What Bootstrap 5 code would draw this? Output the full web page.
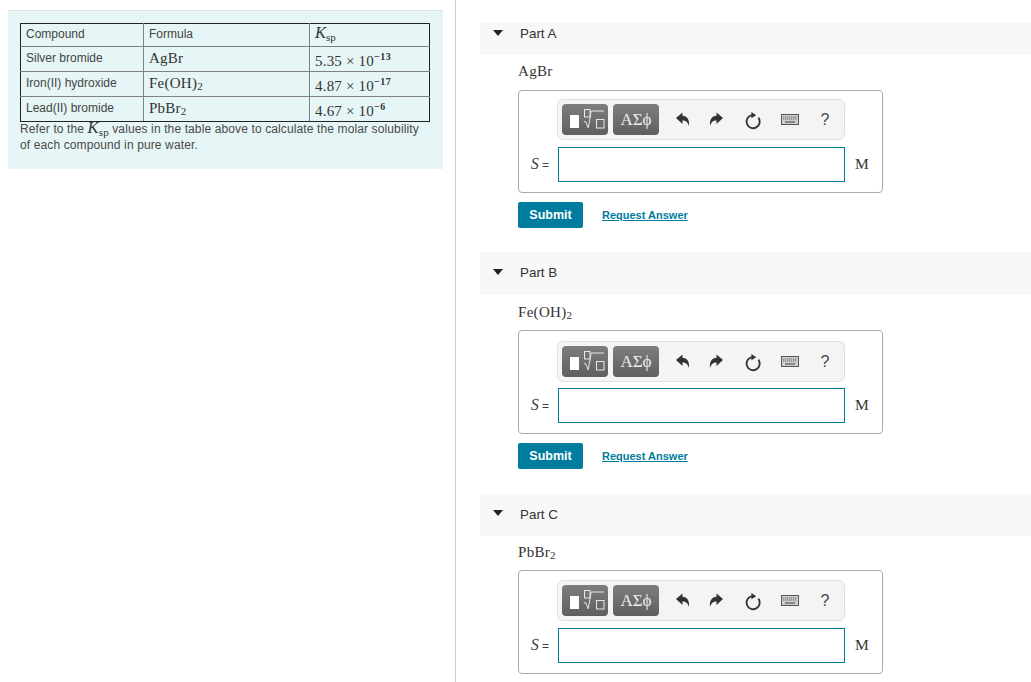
<!DOCTYPE html>
<html lang="en"><head><meta charset="utf-8"><title>Solubility</title>
<link rel="stylesheet" href="https://cdn.jsdelivr.net/npm/bootstrap@5.3.0/dist/css/bootstrap.min.css">
<style>
html,body{height:682px;overflow:hidden;background:#fff}
body{font-family:"Liberation Sans",Arial,sans-serif;font-size:12px;color:#333;line-height:16px}
.shell{height:682px}
.leftcol{width:456px;flex:none;border-right:1px solid #c9ced3;padding:10px 12px 0 8px}
.intro{height:159px;background:#e6f5f5;border-top:1px solid #d9e3e6;padding:12px 12px 0 12px}
.ktable{width:409px;border-collapse:collapse;table-layout:fixed}
.ktable td{border:1px solid #808080;padding:0 0 2px 5px;height:25px;line-height:16px;color:#444;vertical-align:middle}
.ktable tr:first-child td{height:23px;border-top-color:#222}
.ktable tr:last-child td{border-bottom-color:#222}
.ktable td:first-child{border-left-color:#222}
.ktable td:last-child{border-right-color:#222}
.mth{font-family:"Liberation Serif",serif;color:#333}
.mth-l{font-size:15px;letter-spacing:.25px}
.mth-v{font-size:15px;position:relative;top:3px;letter-spacing:.2px}
.mth sub{font-size:11px;bottom:-.2em;line-height:0}
.mth sup{font-size:10px;top:-.6em;line-height:0;font-weight:700;letter-spacing:.5px}
.ki{font-style:italic;font-size:16.5px;line-height:0}
.ksub{font-size:11px;font-style:normal;position:relative;top:3px}
.note{color:#4a4a4a;margin-top:-1px;line-height:16px;letter-spacing:.12px}
.rightcol{flex:1;padding:23px 0 0 24px;min-width:0}
.parthead{background:#f8f8f8;padding:13px 0 0 40px;font-size:13.4px;color:#333;position:relative}
.parthead.heada{height:32px;padding-top:3px}
.parthead.headb{height:42.5px}
.parthead.headc{height:42px}
.caret{position:absolute;left:13px;top:17px;width:0;height:0;border-left:5px solid transparent;border-right:5px solid transparent;border-top:6px solid #222}
.heada .caret{top:7px}
.headc .caret{top:16px}
.partbody{padding-left:38px}
.bodya{height:197px}
.bodyb{height:199.5px}
.chem{font-family:"Liberation Serif",serif;font-size:15px;letter-spacing:.3px;color:#333;line-height:18px}
.bodya .chem{height:34.5px;padding-top:7px}
.bodyb .chem{height:35.5px;padding-top:8px}
.bodyc .chem{height:34px;padding-top:7px}
.chem sub{font-size:11px;bottom:-.2em;line-height:0}
.ansbox{width:365px;border:1px solid #aaa;border-radius:4px;padding:0 0 0 38px}
.bodya .ansbox{height:103px;padding-top:8.5px}
.bodyb .ansbox{height:104px;padding-top:10px}
.bodyc .ansbox{height:103.5px;padding-top:9px}
.tools{width:288px;height:41px;background:#f4f4f4;border:1px solid #e0e0e0;border-radius:6px;padding:0 0 0 4px}
.tmplbtn{width:46px;height:31px;border-radius:4px;background:linear-gradient(#7e7e7e,#5f5f5f);color:#eee;font-family:"Liberation Serif",serif;font-size:17px;margin-right:5px;flex:none}
.tmplbtn svg{display:block}
.ico{width:36px;height:32px;flex:none}
.ico-first{margin-left:1px}
.ico-tight{margin-left:-2px}
.ico-kbd{margin-left:1px}
.icohelp{font-size:16px;color:#444;width:36px;text-align:center;flex:none;margin-left:-1px}
.ansrow{margin-top:7px;margin-left:-38px;height:35px}
.bodyb .ansrow{margin-top:6px}
.lbl{width:39px;text-align:right;padding-right:9px;color:#444;flex:none}
.lbl i{font-family:"Liberation Serif",serif;font-size:16px}
.ansinput{width:287px;height:35px;border:1px solid #007c9e;background:#fff;flex:none;display:block}
.unit{font-family:"Liberation Serif",serif;font-size:15.5px;margin-left:10px;color:#333;line-height:14px;padding-bottom:2px}
.actions{margin-top:9px;height:26px}
.subbtn{background:#007c9e;color:#fff;border:0;border-radius:2px;width:65px;height:26px;padding:0;font-size:12.5px;font-weight:700;font-family:"Liberation Sans",sans-serif}
.reqlink{color:#007c9e;font-size:11px;font-weight:700;margin-left:19px;text-decoration:underline}
</style></head>
<body>
<svg width="0" height="0" class="d-block" aria-hidden="true"><defs>
<g id="i-tmpl"><rect x="8" y="11" width="9" height="13" fill="#fff"/><rect x="22.5" y="5.5" width="5.5" height="7.5" fill="none" stroke="#e8e8e8"/><path d="M22 18l1.5-.7 2.7 6.5 3-16.8h12.8" fill="none" stroke="#e8e8e8"/><rect x="34.5" y="15.5" width="7.5" height="8.5" fill="none" stroke="#e8e8e8"/></g>
<g id="i-undo"><path d="M0 6 L6.5 .5 V3.8 C11 3.8 13.6 7.5 13 14 C11.6 10.2 10 8.6 6.5 8.6 V12 Z" fill="#333"/></g>
<g id="i-redo"><path d="M13 6 L6.5 .5 V3.8 C2 3.8 -.6 7.5 0 14 C1.4 10.2 3 8.6 6.5 8.6 V12 Z" fill="#333"/></g>
<g id="i-reset"><path d="M7 3.1 A6.6 6.6 0 1 0 13.4 5.6" fill="none" stroke="#333" stroke-width="1.8"/><path d="M6.4 0 L11.2 3.2 L6.4 6.2 Z" fill="#333"/></g>
<g id="i-kbd"><rect x=".5" y=".5" width="17" height="10" fill="#cfcfcf" stroke="#555"/><path d="M2 3h14M2 5h14" stroke="#666" stroke-width="1" stroke-dasharray="1.3 .7"/><path d="M4 8h10" stroke="#555" stroke-width="1.2"/></g>
</defs></svg>
<div class="d-flex shell">
 <div class="leftcol">
  <div class="intro">
   <table class="ktable">
    <colgroup><col style="width:123px"><col style="width:166px"><col style="width:120px"></colgroup>
    <tr><td>Compound</td><td>Formula</td><td><span class="mth ki">K<span class="ksub">sp</span></span></td></tr>
    <tr><td>Silver bromide</td><td><span class="mth mth-l">AgBr</span></td><td><span class="mth mth-v">5.35 × 10<sup>−13</sup></span></td></tr>
    <tr><td>Iron(II) hydroxide</td><td><span class="mth mth-l">Fe(OH)<sub>2</sub></span></td><td><span class="mth mth-v">4.87 × 10<sup>−17</sup></span></td></tr>
    <tr><td>Lead(II) bromide</td><td><span class="mth mth-l">PbBr<sub>2</sub></span></td><td><span class="mth mth-v">4.67 × 10<sup>−6</sup></span></td></tr>
   </table>
   <div class="note">Refer to the <span class="mth ki">K<span class="ksub">sp</span></span> values in the table above to calculate the molar solubility<br>of each compound in pure water.</div>
  </div>
 </div>
 <div class="rightcol">

  <div class="parthead heada"><span class="caret"></span>Part A</div>
  <div class="partbody bodya">
   <div class="chem">AgBr</div>
   <div class="ansbox">
    <div class="tools d-flex align-items-center">
     <div class="tmplbtn"><svg width="46" height="31" viewBox="0 0 46 31"><use href="#i-tmpl"/></svg></div>
     <div class="tmplbtn d-flex align-items-center justify-content-center">ΑΣϕ</div>
     <svg class="ico ico-first" viewBox="-11 -8 36 32"><use href="#i-undo"/></svg>
     <svg class="ico ico-tight" viewBox="-11 -8 36 32"><use href="#i-redo"/></svg>
     <svg class="ico" viewBox="-10 -8 36 32"><use href="#i-reset"/></svg>
     <svg class="ico ico-kbd" viewBox="-9 -10 36 32"><use href="#i-kbd"/></svg>
     <span class="icohelp">?</span>
    </div>
    <div class="ansrow d-flex align-items-center"><span class="lbl"><i>S</i> =</span><span class="ansinput"></span><span class="unit">M</span></div>
   </div>
   <div class="actions d-flex align-items-center"><button class="subbtn" type="button">Submit</button><a href="#" class="reqlink">Request Answer</a></div>
  </div>

  <div class="parthead headb"><span class="caret"></span>Part B</div>
  <div class="partbody bodyb">
   <div class="chem">Fe(OH)<sub>2</sub></div>
   <div class="ansbox">
    <div class="tools d-flex align-items-center">
     <div class="tmplbtn"><svg width="46" height="31" viewBox="0 0 46 31"><use href="#i-tmpl"/></svg></div>
     <div class="tmplbtn d-flex align-items-center justify-content-center">ΑΣϕ</div>
     <svg class="ico ico-first" viewBox="-11 -8 36 32"><use href="#i-undo"/></svg>
     <svg class="ico ico-tight" viewBox="-11 -8 36 32"><use href="#i-redo"/></svg>
     <svg class="ico" viewBox="-10 -8 36 32"><use href="#i-reset"/></svg>
     <svg class="ico ico-kbd" viewBox="-9 -10 36 32"><use href="#i-kbd"/></svg>
     <span class="icohelp">?</span>
    </div>
    <div class="ansrow d-flex align-items-center"><span class="lbl"><i>S</i> =</span><span class="ansinput"></span><span class="unit">M</span></div>
   </div>
   <div class="actions d-flex align-items-center"><button class="subbtn" type="button">Submit</button><a href="#" class="reqlink">Request Answer</a></div>
  </div>

  <div class="parthead headc"><span class="caret"></span>Part C</div>
  <div class="partbody bodyc">
   <div class="chem">PbBr<sub>2</sub></div>
   <div class="ansbox">
    <div class="tools d-flex align-items-center">
     <div class="tmplbtn"><svg width="46" height="31" viewBox="0 0 46 31"><use href="#i-tmpl"/></svg></div>
     <div class="tmplbtn d-flex align-items-center justify-content-center">ΑΣϕ</div>
     <svg class="ico ico-first" viewBox="-11 -8 36 32"><use href="#i-undo"/></svg>
     <svg class="ico ico-tight" viewBox="-11 -8 36 32"><use href="#i-redo"/></svg>
     <svg class="ico" viewBox="-10 -8 36 32"><use href="#i-reset"/></svg>
     <svg class="ico ico-kbd" viewBox="-9 -10 36 32"><use href="#i-kbd"/></svg>
     <span class="icohelp">?</span>
    </div>
    <div class="ansrow d-flex align-items-center"><span class="lbl"><i>S</i> =</span><span class="ansinput"></span><span class="unit">M</span></div>
   </div>
  </div>

 </div>
</div>
<script src="https://cdn.jsdelivr.net/npm/bootstrap@5.3.0/dist/js/bootstrap.bundle.min.js"></script>
</body></html>
